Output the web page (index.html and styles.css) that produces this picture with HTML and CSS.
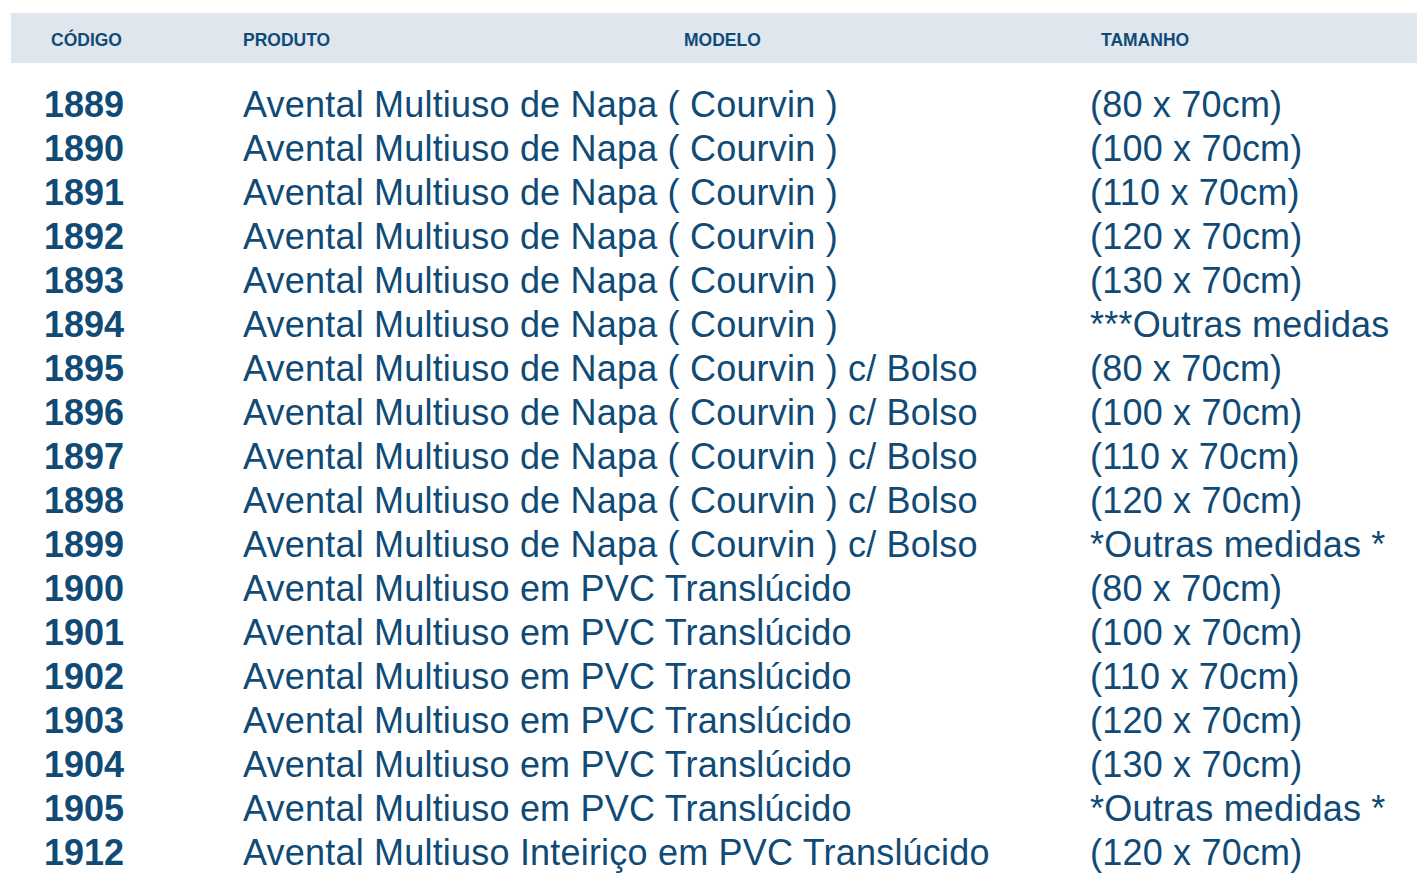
FILE: index.html
```html
<!DOCTYPE html>
<html lang="pt">
<head>
<meta charset="utf-8">
<title>Tabela de Aventais</title>
<link rel="stylesheet" href="styles.css">
</head>
<body>
<div class="table">
  <div class="head">
    <div class="h h-code">CÓDIGO</div>
    <div class="h h-prod">PRODUTO</div>
    <div class="h h-model">MODELO</div>
    <div class="h h-size">TAMANHO</div>
  </div>
  <div class="rows">
    <div class="row"><span class="code">1889</span><span class="prod">Avental Multiuso de Napa ( Courvin )</span><span class="size">(80 x 70cm)</span></div>
    <div class="row"><span class="code">1890</span><span class="prod">Avental Multiuso de Napa ( Courvin )</span><span class="size">(100 x 70cm)</span></div>
    <div class="row"><span class="code">1891</span><span class="prod">Avental Multiuso de Napa ( Courvin )</span><span class="size">(110 x 70cm)</span></div>
    <div class="row"><span class="code">1892</span><span class="prod">Avental Multiuso de Napa ( Courvin )</span><span class="size">(120 x 70cm)</span></div>
    <div class="row"><span class="code">1893</span><span class="prod">Avental Multiuso de Napa ( Courvin )</span><span class="size">(130 x 70cm)</span></div>
    <div class="row"><span class="code">1894</span><span class="prod">Avental Multiuso de Napa ( Courvin )</span><span class="size">***Outras medidas</span></div>
    <div class="row"><span class="code">1895</span><span class="prod">Avental Multiuso de Napa ( Courvin ) c/ Bolso</span><span class="size">(80 x 70cm)</span></div>
    <div class="row"><span class="code">1896</span><span class="prod">Avental Multiuso de Napa ( Courvin ) c/ Bolso</span><span class="size">(100 x 70cm)</span></div>
    <div class="row"><span class="code">1897</span><span class="prod">Avental Multiuso de Napa ( Courvin ) c/ Bolso</span><span class="size">(110 x 70cm)</span></div>
    <div class="row"><span class="code">1898</span><span class="prod">Avental Multiuso de Napa ( Courvin ) c/ Bolso</span><span class="size">(120 x 70cm)</span></div>
    <div class="row"><span class="code">1899</span><span class="prod">Avental Multiuso de Napa ( Courvin ) c/ Bolso</span><span class="size">*Outras medidas *</span></div>
    <div class="row"><span class="code">1900</span><span class="prod">Avental Multiuso em PVC Translúcido</span><span class="size">(80 x 70cm)</span></div>
    <div class="row"><span class="code">1901</span><span class="prod">Avental Multiuso em PVC Translúcido</span><span class="size">(100 x 70cm)</span></div>
    <div class="row"><span class="code">1902</span><span class="prod">Avental Multiuso em PVC Translúcido</span><span class="size">(110 x 70cm)</span></div>
    <div class="row"><span class="code">1903</span><span class="prod">Avental Multiuso em PVC Translúcido</span><span class="size">(120 x 70cm)</span></div>
    <div class="row"><span class="code">1904</span><span class="prod">Avental Multiuso em PVC Translúcido</span><span class="size">(130 x 70cm)</span></div>
    <div class="row"><span class="code">1905</span><span class="prod">Avental Multiuso em PVC Translúcido</span><span class="size">*Outras medidas *</span></div>
    <div class="row"><span class="code">1912</span><span class="prod">Avental Multiuso Inteiriço em PVC Translúcido</span><span class="size">(120 x 70cm)</span></div>
  </div>
</div>
</body>
</html>
```

FILE: styles.css
```css
html, body {
  margin: 0;
  padding: 0;
  background: #ffffff;
}

body {
  font-family: "Liberation Sans", Arial, sans-serif;
  color: #0f4b76;
  overflow: hidden;
}

.table {
  padding-top: 13px;
}

.head {
  margin-left: 11px;
  height: 50px;
  background: #dfe6ee;
  display: flex;
  align-items: center;
  padding-left: 40px;
  box-sizing: border-box;
}

.h {
  font-size: 17.5px;
  font-weight: bold;
  line-height: 20px;
  padding-top: 4px;
  color: #0f4b76;
}

.h-code { width: 192px; }
.h-prod { width: 441px; }
.h-model { width: 417px; }
.h-size { flex: 1; }

.rows {
  padding-top: 20px;
}

.row {
  display: grid;
  grid-template-columns: 199px 847px 1fr;
  padding-left: 44px;
  height: 44px;
  line-height: 44px;
  font-size: 36px;
  white-space: nowrap;
}

.code {
  font-weight: bold;
}

.prod, .size {
  letter-spacing: 0.2px;
}
```
